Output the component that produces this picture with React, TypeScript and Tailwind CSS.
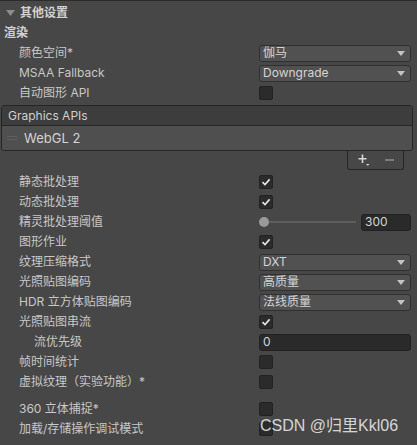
import React from "react";

type Row =
  | { kind: "check"; label: string; checked: boolean; indent?: boolean }
  | { kind: "dropdown"; label: string; value: string }
  | { kind: "slider"; label: string; value: string }
  | { kind: "field"; label: string; value: string; indent?: boolean };

const font = { fontFamily: '"Inter", "Noto Sans CJK SC", sans-serif' };

function Checkbox({ checked }: { checked: boolean }) {
  return (
    <div className="w-[14px] h-[14px] rounded-[2px] bg-[#2b2b2b] border border-[#222222] flex items-center justify-center">
      {checked && (
        <svg width="10" height="10" viewBox="0 0 10 10">
          <path d="M1.5 5.2 L4 7.6 L8.6 2.4" fill="none" stroke="#e6e6e6" strokeWidth="1.6" />
        </svg>
      )}
    </div>
  );
}

function Dropdown({ value }: { value: string }) {
  return (
    <div className="w-[152px] h-[17px] rounded-[3px] bg-[#515151] border border-[#303030] flex items-center justify-between pl-[3px] pr-[5px] text-[#d4d4d4]">
      <span>{value}</span>
      <svg width="8" height="5" viewBox="0 0 8 5">
        <path d="M0 0 H8 L4 5 Z" fill="#c4c4c4" />
      </svg>
    </div>
  );
}

function Field({ value, width }: { value: string; width: string }) {
  return (
    <div className={`${width} h-[17px] rounded-[3px] bg-[#2a2a2a] border border-[#212121] flex items-center pl-[3px] text-[#d4d4d4]`}>
      {value}
    </div>
  );
}

function Slider({ value }: { value: string }) {
  return (
    <div className="w-[152px] flex items-center">
      <div className="relative w-[97px] h-[10px] flex items-center">
        <div className="w-full h-[2px] ml-[5px] bg-[#5e5e5e]" />
        <div className="absolute left-0 top-0 w-[10px] h-[10px] rounded-full bg-[#999999]" />
      </div>
      <div className="ml-[5px]">
        <Field value={value} width="w-[50px]" />
      </div>
    </div>
  );
}

function SettingRow({ row }: { row: Row }) {
  const indent = "indent" in row && row.indent;
  return (
    <div className="h-[20px] flex items-center">
      <div className={`w-[259px] ${indent ? "pl-[34px]" : "pl-[19px]"} text-[#c8c8c8] whitespace-nowrap`}>
        {row.label}
      </div>
      {row.kind === "check" && <Checkbox checked={row.checked} />}
      {row.kind === "dropdown" && <Dropdown value={row.value} />}
      {row.kind === "slider" && <Slider value={row.value} />}
      {row.kind === "field" && <Field value={row.value} width="w-[152px]" />}
    </div>
  );
}

const rendering: Row[] = [
  { kind: "dropdown", label: "颜色空间*", value: "伽马" },
  { kind: "dropdown", label: "MSAA Fallback", value: "Downgrade" },
  { kind: "check", label: "自动图形 API", checked: false },
];

const batching: Row[] = [
  { kind: "check", label: "静态批处理", checked: true },
  { kind: "check", label: "动态批处理", checked: true },
  { kind: "slider", label: "精灵批处理阈值", value: "300" },
  { kind: "check", label: "图形作业", checked: true },
  { kind: "dropdown", label: "纹理压缩格式", value: "DXT" },
  { kind: "dropdown", label: "光照贴图编码", value: "高质量" },
  { kind: "dropdown", label: "HDR 立方体贴图编码", value: "法线质量" },
  { kind: "check", label: "光照贴图串流", checked: true },
  { kind: "field", label: "流优先级", value: "0", indent: true },
  { kind: "check", label: "帧时间统计", checked: false },
  { kind: "check", label: "虚拟纹理（实验功能）*", checked: false },
];

const capture: Row[] = [
  { kind: "check", label: "360 立体捕捉*", checked: false },
  { kind: "check", label: "加载/存储操作调试模式", checked: false },
];

export default function App() {
  return (
    <div
      className="relative w-[417px] h-[445px] overflow-hidden bg-[#474747] text-[12px] leading-none border-t border-[#2c2c2c]"
      style={font}
    >
      {/* foldout header */}
      <div className="h-[22px] flex items-center pl-[6px] pt-[1px]">
        <svg width="9" height="6" viewBox="0 0 9 6">
          <path d="M0 0 H9 L4.5 6 Z" fill="#8c8c8c" />
        </svg>
        <span className="ml-[5px] font-bold text-[#d2d2d2]">其他设置</span>
      </div>
      <div className="h-[20px] flex items-center pl-[4px] font-bold text-[#d2d2d2]">渲染</div>
      {rendering.map((r) => (
        <SettingRow key={r.label} row={r} />
      ))}

      {/* Graphics APIs reorderable list */}
      <div className="mt-[2px] ml-[1px] w-[412px] rounded-[3px] border border-[#262626] overflow-hidden">
        <div className="h-[20px] flex items-center pl-[6px] bg-[#3d3d3d] border-b border-[#262626] text-[#cfcfcf]">
          Graphics APIs
        </div>
        <div className="h-[24px] flex items-center bg-[#4f4f4f] text-[#d4d4d4]">
          <div className="ml-[5px] w-[10px] flex flex-col gap-[2px]">
            <div className="h-px bg-[#5f5f5f]" />
            <div className="h-px bg-[#5f5f5f]" />
          </div>
          <span className="ml-[7px] text-[13px]">WebGL 2</span>
        </div>
      </div>
      <div className="flex justify-end pr-[13px]">
        <div className="w-[57px] h-[20px] -mt-px rounded-b-[3px] border border-t-0 border-[#262626] flex items-center justify-center gap-[15px] text-[#d0d0d0]">
          <svg width="12" height="12" viewBox="0 0 12 12">
            <path d="M4.5 0.5 V9 M0.5 4.7 H8.5" stroke="#d8d8d8" strokeWidth="1.6" />
            <path d="M8 10 H11.5 L9.75 11.8 Z" fill="#d8d8d8" />
          </svg>
          <svg width="9" height="4" viewBox="0 0 9 4">
            <path d="M0 2 H9" stroke="#8a8a8a" strokeWidth="1.6" />
          </svg>
        </div>
      </div>

      <div className="mt-[2px]">
        {batching.map((r) => (
          <SettingRow key={r.label} row={r} />
        ))}
      </div>
      <div className="mt-[7px]">
        {capture.map((r) => (
          <SettingRow key={r.label} row={r} />
        ))}
      </div>

      <div
        className="absolute left-[260px] top-[417px] text-[16px] text-[#e8e8e8]/90 whitespace-nowrap"
        style={{ fontFamily: '"Liberation Sans", "Noto Sans CJK SC", sans-serif' }}
      >
        CSDN @归里Kkl06
      </div>
    </div>
  );
}
